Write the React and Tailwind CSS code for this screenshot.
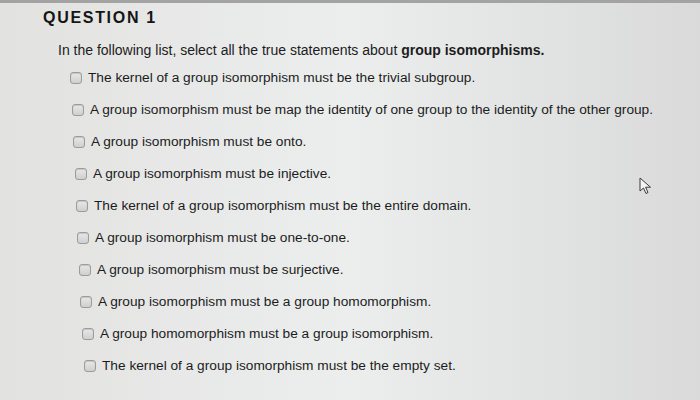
const items = [
  { pad: "pl-[70px]", text: "The kernel of a group isomorphism must be the trivial subgroup." },
  { pad: "pl-[72px]", text: "A group isomorphism must be map the identity of one group to the identity of the other group." },
  { pad: "pl-[73px]", text: "A group isomorphism must be onto." },
  { pad: "pl-[75px]", text: "A group isomorphism must be injective." },
  { pad: "pl-[76px]", text: "The kernel of a group isomorphism must be the entire domain." },
  { pad: "pl-[77px]", text: "A group isomorphism must be one-to-one." },
  { pad: "pl-[79px]", text: "A group isomorphism must be surjective." },
  { pad: "pl-[80px]", text: "A group isomorphism must be a group homomorphism." },
  { pad: "pl-[82px]", text: "A group homomorphism must be a group isomorphism." },
  { pad: "pl-[84px]", text: "The kernel of a group isomorphism must be the empty set." },
];

function Checkbox() {
  return (
    <span className="w-[12px] h-[12px] shrink-0 rounded-[3px] border border-[#9c9c9c] bg-gradient-to-b from-[#e9e9e9] to-[#cfcfcf] shadow-[inset_0_1px_1px_rgba(0,0,0,0.15)]" />
  );
}

function Cursor() {
  return (
    <svg className="absolute left-[639px] top-[174px]" width="14" height="18" viewBox="0 0 14 18">
      <path
        d="M1 1 L1 14 L4.5 11 L7 16.5 L9 15.5 L6.6 10.2 L11.5 10.2 Z"
        fill="#f4f4f4"
        stroke="#3a3a3a"
        strokeWidth="1"
        strokeLinejoin="round"
      />
    </svg>
  );
}

export default function App() {
  return (
    <div className="relative w-[700px] h-[400px] overflow-hidden border-t-[3px] border-[#a3a3a3] bg-gradient-to-r from-[#e2e2e0] via-[#eceeee] to-[#d9dad9] font-['Liberation_Sans',Arial,sans-serif] text-[#1c1c1c]">
      <div className="pl-[43px] pt-[5px] h-[20px] leading-[20px] text-[16px] font-bold tracking-[1.7px] text-[#151515]">
        QUESTION 1
      </div>
      <div className="pl-[58px] mt-[17px] leading-[20px] text-[14px]">
        In the following list, select all the true statements about{" "}
        <span className="font-bold">group isomorphisms.</span>
      </div>
      <div className="mt-[2px] flex flex-col">
        {items.map((it, i) => (
          <div key={i} className={`h-[32px] flex items-center gap-[6px] ${it.pad}`}>
            <Checkbox />
            <span className="text-[13.7px] leading-[20px]">{it.text}</span>
          </div>
        ))}
      </div>
      <Cursor />
    </div>
  );
}
